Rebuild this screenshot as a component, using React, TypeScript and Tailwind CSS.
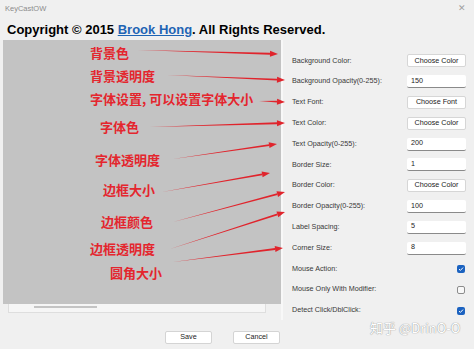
import React from "react";

type Row =
  | { label: string; kind: "button"; value: string }
  | { label: string; kind: "input"; value: string }
  | { label: string; kind: "check"; checked: boolean };

const rows: Row[] = [
  { label: "Background Color:", kind: "button", value: "Choose Color" },
  { label: "Background Opacity(0-255):", kind: "input", value: "150" },
  { label: "Text Font:", kind: "button", value: "Choose Font" },
  { label: "Text Color:", kind: "button", value: "Choose Color" },
  { label: "Text Opacity(0-255):", kind: "input", value: "200" },
  { label: "Border Size:", kind: "input", value: "1" },
  { label: "Border Color:", kind: "button", value: "Choose Color" },
  { label: "Border Opacity(0-255):", kind: "input", value: "100" },
  { label: "Label Spacing:", kind: "input", value: "5" },
  { label: "Corner Size:", kind: "input", value: "8" },
  { label: "Mouse Action:", kind: "check", checked: true },
  { label: "Mouse Only With Modifier:", kind: "check", checked: false },
  { label: "Detect Click/DblClick:", kind: "check", checked: true },
];

// annotation labels, window coordinates
const notes = [
  { text: "背景色", left: 90, top: 46 },
  { text: "背景透明度", left: 90, top: 69 },
  { text: "字体设置, 可以设置字体大小", left: 90, top: 92 },
  { text: "字体色", left: 100, top: 120 },
  { text: "字体透明度", left: 95, top: 153 },
  { text: "边框大小", left: 103, top: 183 },
  { text: "边框颜色", left: 101, top: 215 },
  { text: "边框透明度", left: 90, top: 242 },
  { text: "圆角大小", left: 110, top: 266 },
];

const arrows = [
  [138, 50, 278, 54],
  [167, 75, 285, 80],
  [259, 101, 285, 102],
  [150, 127, 285, 123],
  [173, 159, 277, 144],
  [162, 192, 270, 173],
  [173, 222, 285, 192],
  [170, 249, 285, 212],
  [173, 262, 283, 248],
];

function Arrow({ x1, y1, x2, y2 }: { x1: number; y1: number; x2: number; y2: number }) {
  const dx = x2 - x1;
  const dy = y2 - y1;
  const len = Math.hypot(dx, dy);
  const ux = dx / len;
  const uy = dy / len;
  const nx = -uy;
  const ny = ux;
  const hl = 8;
  const hw = 3;
  const bx = x2 - ux * hl;
  const by = y2 - uy * hl;
  const shaft = `${x1},${y1} ${bx + nx * 0.9},${by + ny * 0.9} ${bx - nx * 0.9},${by - ny * 0.9}`;
  const head = `${x2},${y2} ${bx + nx * hw},${by + ny * hw} ${bx - nx * hw},${by - ny * hw}`;
  return (
    <g fill="#e0242c">
      <polygon points={shaft} />
      <polygon points={head} />
    </g>
  );
}

function Control({ row }: { row: Row }) {
  if (row.kind === "button") {
    return (
      <div className="w-[59px] h-[13px] bg-white border border-[#d6d6d6] rounded-[2px] flex items-center justify-center text-[7.2px] text-[#222]">
        {row.value}
      </div>
    );
  }
  if (row.kind === "input") {
    return (
      <div className="w-[59px] h-[13px] bg-white border-b border-[#8a8a8a] rounded-[2px] flex items-center pl-[4px] text-[7.2px] text-[#222]">
        {row.value}
      </div>
    );
  }
  return (
    <div className="w-[59px] flex justify-end pr-[1px]">
      {row.checked ? (
        <div className="w-[8px] h-[8px] rounded-[2px] bg-[#1b62c0] flex items-center justify-center">
          <svg width="6" height="6" viewBox="0 0 6 6">
            <path d="M1 3.1 L2.4 4.4 L5 1.6" stroke="white" strokeWidth="1" fill="none" />
          </svg>
        </div>
      ) : (
        <div className="w-[8px] h-[8px] rounded-[2px] border border-[#8c8c8c] bg-[#f8f8f8]" />
      )}
    </div>
  );
}

export default function App() {
  return (
    <div className="relative w-[474px] h-[349px] overflow-hidden bg-[#f0f0f0] font-['Liberation_Sans',Arial,sans-serif]">
      {/* title bar */}
      <div className="h-[18px] flex items-center justify-between pl-[5px] pr-[8px]">
        <span className="text-[7.5px] text-[#8c8c8c]">KeyCastOW</span>
        <span className="text-[9px] text-[#a0a0a0]">✕</span>
      </div>

      {/* copyright */}
      <div className="h-[22px] flex items-center pl-[7px] pt-[2px] text-[13px] font-bold text-black">
        Copyright © 2015&nbsp;<span className="text-[#1e64b4] underline">Brook Hong</span>. All Rights Reserved.
      </div>

      <div className="flex h-[280px]">
        {/* preview */}
        <div className="w-[281px] pl-[3px]">
          <div className="h-[264px] bg-[#c3c3c3]" />
          <div className="relative ml-[5px] w-[258px] h-[9px] bg-[#f6f6f6] border-x border-b border-[#dedede]">
            <div className="absolute left-[25px] top-[2px] w-[63px] h-[2px] bg-[#c4c4c4]" />
          </div>
        </div>

        {/* settings */}
        <div className="flex-1 border-l-2 border-[#f8f8f8] pt-[10.6px]">
          {rows.map((row) => (
            <div key={row.label} className="h-[20.8px] flex items-center justify-between pl-[9px] pr-[8px]">
              <span className="text-[7.2px] text-[#383838]">{row.label}</span>
              <Control row={row} />
            </div>
          ))}
        </div>
      </div>

      {/* footer */}
      <div className="h-[29px] flex items-center gap-[21px] pl-[165px] pt-[6px]">
        <div className="w-[47px] h-[13px] bg-white border border-[#d4d4d4] rounded-[2px] flex items-center justify-center text-[7.2px] text-[#222]">
          Save
        </div>
        <div className="w-[47px] h-[13px] bg-white border border-[#d4d4d4] rounded-[2px] flex items-center justify-center text-[7.2px] text-[#222]">
          Cancel
        </div>
      </div>

      {/* annotations */}
      <svg className="absolute left-0 top-0 pointer-events-none" width="474" height="349">
        {arrows.map(([x1, y1, x2, y2], i) => (
          <Arrow key={i} x1={x1} y1={y1} x2={x2} y2={y2} />
        ))}
      </svg>
      {notes.map((n) => (
        <div
          key={n.text}
          className="absolute text-[13px] leading-[14px] font-bold text-[#e4262e] whitespace-nowrap font-['Noto_Sans_CJK_SC',sans-serif]"
          style={{ left: n.left, top: n.top }}
        >
          {n.text}
        </div>
      ))}

      {/* watermark */}
      <div className="absolute left-[370px] top-[320px] text-[13px] leading-[16px] text-white whitespace-nowrap font-['Noto_Sans_CJK_SC',sans-serif] [text-shadow:0_0_1px_#9a9a9a,0_0_1px_#9a9a9a]">
        知乎 @DrinO-O
      </div>
    </div>
  );
}
